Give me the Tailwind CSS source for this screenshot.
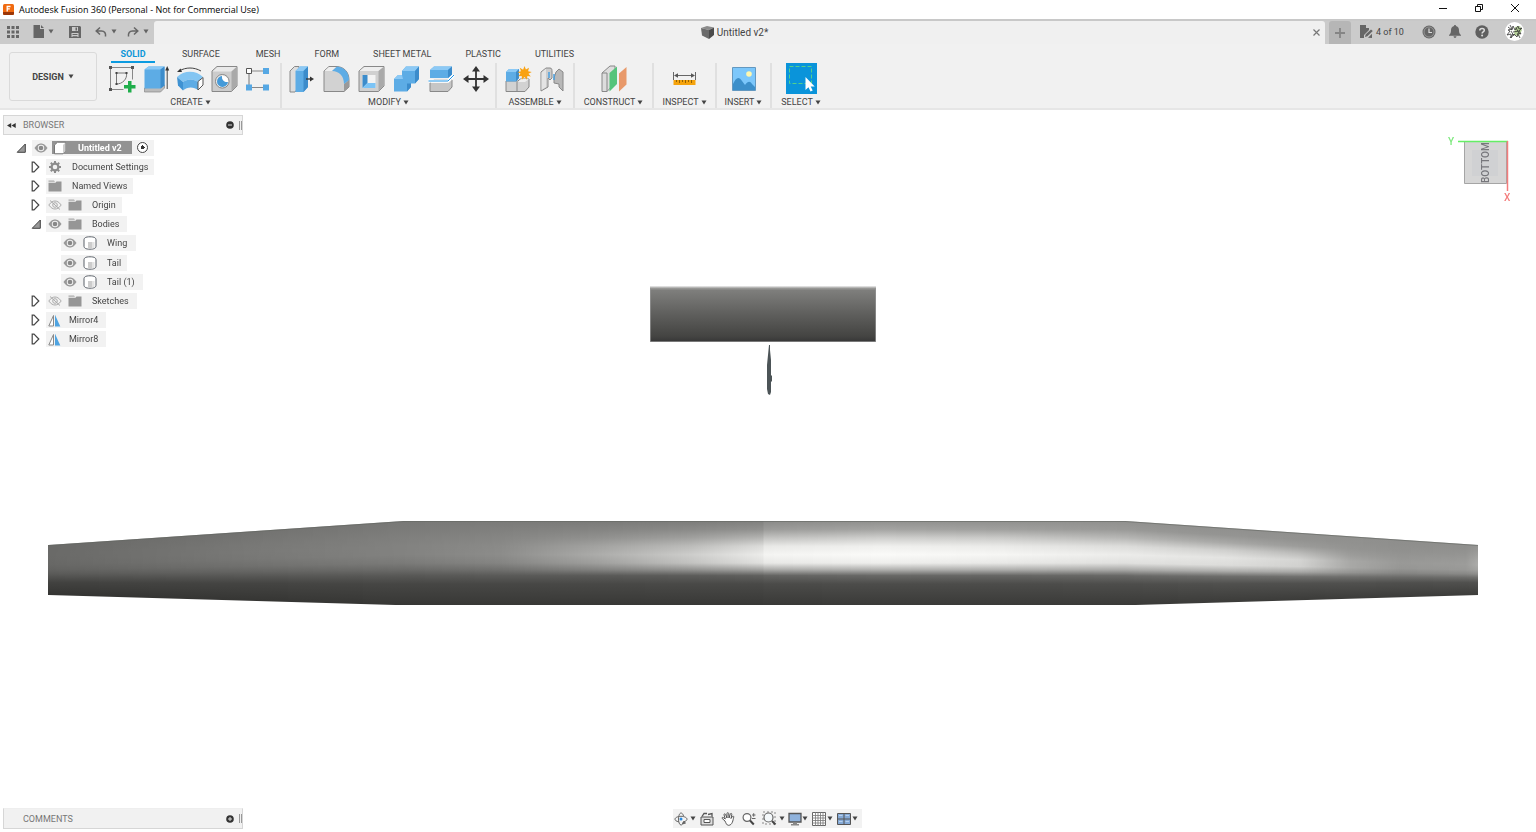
<!DOCTYPE html>
<html lang="en">
<head>
  <meta charset="UTF-8">
  <meta name="viewport" content="width=device-width, initial-scale=1.0">
  <title>Autodesk Fusion 360</title>
  <script src="https://cdn.jsdelivr.net/npm/@tailwindcss/browser@4"></script>
</head>
<body class="flex h-screen flex-col overflow-hidden bg-white font-['Roboto','Liberation_Sans',sans-serif] text-[9px] leading-[12px] text-[#444]">

  <!-- shared icons -->
  <svg class="hidden">
    <symbol id="caret" viewBox="0 0 6 5"><path d="M.5.5h5L3 4.5z" fill="currentColor"/></symbol>
    <symbol id="eye" viewBox="0 0 14 10"><path d="M.5 5C3 1.300 5 .5 7 .5s4 .8 6.500 4.500C11 8.700 9 9.500 7 9.500S3 8.700.5 5z" fill="#999"/><circle cx="7" cy="5" r="3.200" fill="#f2f2f2"/><circle cx="7" cy="5" r="2.300" fill="#888"/></symbol>
    <symbol id="eye-off" viewBox="0 0 14 10"><path d="M.8 5C3 2 5 1 7 1s4 1 6.200 4C11 8 9 9 7 9S3 8 .8 5z" fill="none" stroke="#aaa"/><circle cx="7" cy="5" r="2.300" fill="none" stroke="#aaa"/><path d="M2 .5l10 9" stroke="#aaa"/></symbol>
    <symbol id="folder" viewBox="0 0 14 12"><path d="M.5.500h5.500l1 1.300H.5z" fill="#aaa"/><path d="M.5 2.800h7l1-1.300h5v10H.5z" fill="#969696"/></symbol>
    <symbol id="closed" viewBox="0 0 9 12"><path d="M1.200 1.200H3L7.800 6 3 10.800H1.200z" fill="#fff" stroke="#444" stroke-width="1.200"/></symbol>
    <symbol id="opened" viewBox="0 0 10 10"><path d="M9.300 1v8.300H1.200z" fill="#999" stroke="#444"/></symbol>
    <symbol id="body" viewBox="0 0 14 14"><path d="M1 4C1 2 2.500.8 7 .8S13 2 13 4v6c0 2-1.500 3.200-6 3.200S1 12 1 10z" fill="#fff" stroke="#5a6068"/><path d="M5 6h4v6.500H5z" fill="#ccc"/><path d="M9 6h2.500v6L9 12.500z" fill="#e4e4e4"/></symbol>
    <symbol id="mirror" viewBox="0 0 13 13"><path d="M5.500 1.500v10.500H.8z" fill="#fff" stroke="#888"/><path d="M7 .8v11.700h5.300z" fill="#4fa3e0"/></symbol>
  </svg>

  <header class="flex h-[19px] shrink-0 items-center bg-white pl-[3px] text-black">
    <svg class="mr-[5px] size-[11px]" viewBox="0 0 11 11"><rect width="11" height="11" rx="1.500" fill="#f06a10"/><path d="M0 8l11 0v1.500a1.500 1.500 0 0 1-1.500 1.500h-8A1.500 1.500 0 0 1 0 9.500z" fill="#9c3606"/><path d="M4.200 7.500V2.500h3.300M4.200 4.900h2.600" fill="none" stroke="#fff" stroke-width="1.300"/></svg>
    <h1 class="font-['Open_Sans',sans-serif]">Autodesk Fusion 360 (Personal - Not for Commercial Use)</h1>
    <div class="ml-auto flex items-center pr-[3px] pb-[3px]">
      <button aria-label="Minimize" class="grid w-[36px] place-items-center"><svg class="size-[10px]" viewBox="0 0 10 10"><path d="M1 5.500h8" stroke="#111"/></svg></button>
      <button aria-label="Restore" class="grid w-[36px] place-items-center"><svg class="size-[10px]" viewBox="0 0 10 10"><path d="M1.500 3.500h5v5h-5zM3.500 3.500v-2h5v5h-2" fill="none" stroke="#111"/></svg></button>
      <button aria-label="Close" class="grid w-[36px] place-items-center"><svg class="size-[10px]" viewBox="0 0 10 10"><path d="M1 1l8 8M9 1l-8 8" stroke="#111"/></svg></button>
    </div>
  </header>

  <!-- quick access bar and document tab -->
  <div class="flex h-[25px] shrink-0 border-t-2 border-[#c8c8c8] bg-[#cbcbcb] text-[#636363]">
    <div class="flex w-[154px] items-center pb-[2px] pl-[7px]">
      <button aria-label="Data panel"><svg class="size-[12px]" viewBox="0 0 12 12" fill="#666"><path d="M0 0h3v3H0zM4.500 0h3v3h-3zM9 0h3v3H9zM0 4.500h3v3H0zM4.500 4.500h3v3h-3zM9 4.500h3v3H9zM0 9h3v3H0zM4.500 9h3v3h-3zM9 9h3v3H9z"/></svg></button>
      <button aria-label="File" class="ml-[14px] flex items-center gap-[4px]"><svg class="h-[13px] w-[11px]" viewBox="0 0 11 13"><path d="M.5 0H7v4h4v9H.5zM8 0l3 3H8z" fill="#666"/></svg><svg class="h-[5px] w-[6px]"><use href="#caret"/></svg></button>
      <button aria-label="Save" class="ml-[15px]"><svg class="size-[12px]" viewBox="0 0 12 12"><path d="M0 0h11l1 1v11H0z" fill="#666"/><path d="M3 1h6v4H3zM2.500 7h7v4h-7z" fill="#cbcbcb"/><path d="M6.500 1.500H8v3H6.500zM3.500 8h5v1h-5zM3.500 10h5v.8h-5z" fill="#666"/></svg></button>
      <button aria-label="Undo" class="ml-[14px] flex items-center gap-[4px]"><svg class="size-[12px]" viewBox="0 0 12 12" fill="none" stroke="#666" stroke-width="1.500"><path d="M5 1.500L1.200 5 5 8.500M1.500 5h5C9.500 5 11 7 10.500 10.500"/></svg><svg class="h-[5px] w-[6px]"><use href="#caret"/></svg></button>
      <button aria-label="Redo" class="ml-[10px] flex items-center gap-[4px]"><svg class="size-[12px]" viewBox="0 0 12 12" fill="none" stroke="#666" stroke-width="1.500"><path d="M7 1.500L10.800 5 7 8.500M10.500 5h-5C2.500 5 1 7 1.500 10.500"/></svg><svg class="h-[5px] w-[6px]"><use href="#caret"/></svg></button>
    </div>
    <div class="flex grow items-center rounded-t-[3px] bg-[#f0f0f0] pr-[4px] pl-[3px]">
      <div class="flex grow items-center justify-center gap-[3px] text-[10px] text-[#444]">
        <svg class="size-[13px]" viewBox="0 0 13 13"><path d="M0 2l6-2 7 1.500L8 4z" fill="#8a8a8a"/><path d="M0 2l8 2v9L1 9.500z" fill="#6b6b6b"/><path d="M8 4l5-2.500V9l-5 4z" fill="#4b4b4b"/></svg>
        <span>Untitled v2*</span>
      </div>
      <button aria-label="Close tab"><svg class="size-[9px]" viewBox="0 0 9 9"><path d="M1.500 1.500l6 6M7.500 1.500l-6 6" stroke="#777" stroke-width="1.200"/></svg></button>
    </div>
    <div class="mr-[2px] flex w-[209px] items-center pl-[4px]">
      <button aria-label="New design" class="grid h-full w-[22px] place-items-center rounded-t-[3px] bg-[#b6b6b6]"><svg class="size-[10px]" viewBox="0 0 10 10"><path d="M5 0v10M0 5h10" stroke="#858585" stroke-width="1.800"/></svg></button>
      <button class="ml-[9px] flex items-center gap-[3px] pb-[2px] whitespace-nowrap text-[#444]"><svg class="size-[13px]" viewBox="0 0 13 13"><path d="M0 0h6v3h3v2L4 10v3H0z" fill="#666"/><path d="M5 12l.6-2.400L11 4.500 12.800 6l-5.400 5.300zM8 12.800l4-4V13z" fill="#666"/></svg>4 of 10</button>
      <button aria-label="Job status" class="ml-[18px] pb-[2px]"><svg class="size-[14px]" viewBox="0 0 14 14"><circle cx="7" cy="7" r="6.500" fill="#666"/><circle cx="7" cy="7" r="5" fill="none" stroke="#aaa" stroke-width=".7"/><path d="M7 3.500V7.500h3" fill="none" stroke="#ddd" stroke-width="1.200"/></svg></button>
      <button aria-label="Notifications" class="ml-[13px] pb-[2px]"><svg class="h-[13px] w-[12px]" viewBox="0 0 12 13"><path d="M6 0c.8 0 1 .5 1 1 2.500.6 3 2.500 3 4.500 0 2.500.7 3.500 2 4.500v.8H0V10c1.300-1 2-2 2-4.500C2 3.500 2.500 1.600 5 1c0-.5.200-1 1-1zM4.500 11.300h3C7.300 12.500 6.800 13 6 13s-1.300-.5-1.500-1.700z" fill="#666"/></svg></button>
      <button aria-label="Help" class="ml-[14px] pb-[2px]"><svg class="size-[14px]" viewBox="0 0 14 14"><circle cx="7" cy="7" r="6.700" fill="#606060"/><path d="M4.800 5.500C4.800 2.800 9.300 2.900 9.300 5.300 9.300 7 7.100 6.800 7.100 8.500" fill="none" stroke="#ddd" stroke-width="1.500"/><circle cx="7.100" cy="10.600" r="1" fill="#ddd"/></svg></button>
      <button aria-label="Account" class="ml-[16px] pb-[2px]"><svg class="size-[19px]" viewBox="0 0 19 19"><circle cx="9.500" cy="9.500" r="9.500" fill="#fff"/><path d="M10 5l5-1 2 4-3 6-5-1z" fill="#b5cf98"/><path d="M3 5l4 3 1-4 2 4 3-4 1 3 3-1-3 3 2 3-3-1-1 4-3-3-3 4v-4l-4 1 3-4-2-1 4-1M11 6l3 5M8 10l6-1M6 9l3 5M5 3l2 4M5 16l3-4M13 12l2 4" fill="none" stroke="#333" stroke-width=".8"/></svg></button>
    </div>
  </div>

  <!-- ribbon -->
  <div class="flex h-[66px] shrink-0 border-b-2 border-[#e6e6e6] bg-[#f1f1f1]">
    <button class="mt-[8px] ml-[9px] flex h-[49px] w-[88px] items-center justify-center gap-[4px] rounded-[3px] border border-[#dadada] font-bold">DESIGN<svg class="h-[5px] w-[6px]"><use href="#caret"/></svg></button>
    <div class="ml-[8px]">
      <nav class="flex h-[19px] pl-[6px]">
        <button class="w-[44px] border-b-2 border-[#0c9be0] pt-[2px] font-bold text-[#0c96d8]">SOLID</button>
        <button class="ml-[18px] px-[9px]">SURFACE</button>
        <button class="ml-[18px] px-[9px]">MESH</button>
        <button class="ml-[16px] px-[9px]">FORM</button>
        <button class="ml-[16px] px-[9px]">SHEET METAL</button>
        <button class="ml-[16px] px-[9px]">PLASTIC</button>
        <button class="ml-[16px] px-[9px]">UTILITIES</button>
      </nav>
      <div class="flex divide-x-2 divide-[#e0e0e0]">
        <section class="flex w-[177px] flex-col items-center">
          <div class="flex h-[31px] w-full items-center">
            <button aria-label="Create sketch" class="grid w-[34px] place-items-center"><svg class="size-[28px]" viewBox="0 0 28 28"><path d="M2.500 2.500h22M2.500 2.500v22h13M24.500 2.500v12" fill="none" stroke="#888"/><path d="M1 1h3v3H1zM23 1h3v3h-3zM1 23h3v3H1z" fill="#555"/><path d="M8.500 8v11M8.500 8h10c1 6-4 11-10 11" fill="none" stroke="#777"/><path d="M7.500 7h2v2h-2zM17.500 7h2v2h-2zM7.500 18h2v2h-2z" fill="#444"/><path d="M20 16h3.500v4h4v3.500h-4v4H20v-4h-4V20h4z" fill="#1fae4b"/></svg></button>
            <button aria-label="Extrude" class="grid w-[34px] place-items-center"><svg class="size-[28px]" viewBox="0 0 28 28"><path d="M2.500 23v4h16l4-4v-3z" fill="#bbb" stroke="#888" stroke-width=".7"/><path d="M2.500 4.500l4-3h16v19l-4 3h-16z" fill="#5dace5"/><path d="M2.500 4.500l4-3h16l-4 3z" fill="#8cc9f5"/><path d="M18.500 4.500l4-3v19l-4 3z" fill="#3c8ccb"/><path d="M25.200 24V4" stroke="#444"/><path d="M25.200 1l2 4.500h-4z" fill="#333"/></svg></button>
            <button aria-label="Revolve" class="grid w-[34px] place-items-center"><svg class="size-[28px]" viewBox="0 0 28 28"><path d="M3 6c7-4 15-4 22 0" fill="none" stroke="#444"/><path d="M1 7l3.500-3.500L6 7z" fill="#333"/><path d="M1 12c7-7 19-7 26 0l-5 5c-4-3.500-11-3.500-15 0z" fill="#83c5f2"/><path d="M1 12l6 5v8.500l-5-5z" fill="#3f92d2"/><path d="M7 17c4-3.500 11-3.500 15 0v8c-4-3.500-11-3.500-15 .5z" fill="#5dace5"/><path d="M22 16.500l5-4V20l-5 5z" fill="#fff" stroke="#555"/></svg></button>
            <button aria-label="Hole" class="grid w-[34px] place-items-center"><svg class="size-[28px]" viewBox="0 0 28 28"><path d="M2 6l5-4.500h20V21l-5.500 5.500H2z" fill="#ccc" stroke="#888"/><path d="M2.500 6.500l5-4.500h19l-5 4.500z" fill="#e9e9e9"/><path d="M21.500 6.500l5-4.500v19l-5 5z" fill="#a9a9a9"/><circle cx="12.300" cy="16.300" r="6.800" fill="#eee" stroke="#888"/><path d="M12 11a5.500 5.500 0 1 0 6 6c-4 0-6-2-6-6z" fill="#459ad8"/><path d="M12 11c0 4 2 6 6 6 0-4-2-6-6-6z" fill="#fff"/></svg></button>
            <button aria-label="Rectangular pattern" class="grid w-[34px] place-items-center"><svg class="size-[28px]" viewBox="0 0 28 28"><path d="M8 6h11M5 9v11M8 22.500h11" stroke="#888" stroke-width="1.200"/><path d="M2.500 3.500h5v5h-5z" fill="#fff" stroke="#555"/><path d="M19 3h6v6h-6zM2 19.500h6v6H2zM19 19.500h6v6h-6z" fill="#56a8e4"/></svg></button>
          </div>
          <button class="mt-[2px] mr-[4px] flex items-center gap-[2px]">CREATE<svg class="h-[5px] w-[6px]"><use href="#caret"/></svg></button>
        </section>
        <section class="flex w-[215px] flex-col items-center pr-[2px] pl-[2px]">
          <div class="flex h-[31px] w-full items-center">
            <button aria-label="Press pull" class="grid w-[35px] place-items-center"><svg class="size-[28px]" viewBox="0 0 28 28"><path d="M3 6l4.500-4.500H12V22l-4 5H3z" fill="#ddd" stroke="#888"/><path d="M8.500 6L13 1.500h8V22l-4.500 5h-8z" fill="#5dace5"/><path d="M8.500 6L13 1.500h8L16.500 6z" fill="#8cc9f5"/><path d="M16.500 6L21 1.500V22l-4.500 5z" fill="#3c8ccb"/><path d="M19 14h5" stroke="#333" stroke-width="1.300"/><path d="M27 14l-4-2.500v5z" fill="#333"/></svg></button>
            <button aria-label="Fillet" class="grid w-[35px] place-items-center"><svg class="size-[28px]" viewBox="0 0 28 28"><path d="M2 6l5-4.500h8C22 2 27 7 27 15v7l-5 4.500H2z" fill="#d2d2d2" stroke="#888"/><path d="M2.500 6L7 2h7l-4 4z" fill="#eee"/><path d="M22 19l5-4v7l-5 4.500z" fill="#999"/><path d="M10 6l5-4.500C22 2 27 7 27 15l-5 4C22 11 17 6 10 6z" fill="#5dace5"/></svg></button>
            <button aria-label="Shell" class="grid w-[35px] place-items-center"><svg class="size-[28px]" viewBox="0 0 28 28"><path d="M2 6l5-4.500h20V21l-5.500 5.500H2z" fill="#d0d0d0" stroke="#888"/><path d="M2.500 6l5-4h19l-5 4z" fill="#eee"/><path d="M21.500 6l5-4v19l-5 5z" fill="#a9a9a9"/><path d="M5.500 10h13v13h-13z" fill="#f3f3f3"/><path d="M5.500 10h5v8l-5 5z" fill="#3c8ccb"/><path d="M5.500 23l5-5h8v5z" fill="#7cc4f6"/></svg></button>
            <button aria-label="Combine" class="grid w-[35px] place-items-center"><svg class="size-[28px]" viewBox="0 0 28 28"><path d="M2 14l4-4h4V6l4-4.500h13V14l-4 4.500h-4V22l-4 4.500H2z" fill="#5dace5"/><path d="M2 14l4-4h4l1 4zM10 6l4-4.500h13L23 6z" fill="#8cc9f5"/><path d="M23 6l4-4.500V14l-4 4.500zM15 18.500h4V22l-4 4.500z" fill="#3c8ccb"/></svg></button>
            <button aria-label="Split body" class="grid w-[35px] place-items-center"><svg class="size-[28px]" viewBox="0 0 28 28"><path d="M3 18l4-3h18v7l-4 4.500H3z" fill="#c6c6c6" stroke="#888"/><path d="M3 18h18l4-3H7z" fill="#eee"/><path d="M3 5l4-3.500h18v8L21 13H3z" fill="#5dace5"/><path d="M3 5l4-3.500h18L21 5z" fill="#8cc9f5"/><path d="M21 5l4-3.500v8L21 13z" fill="#3c8ccb"/><path d="M1.500 16H21l6-6" fill="none" stroke="#fff" stroke-width="3"/><path d="M1.500 16H21l6-6" fill="none" stroke="#2196e8"/></svg></button>
            <button aria-label="Move/Copy" class="grid w-[35px] place-items-center"><svg class="size-[28px]" viewBox="0 0 28 28"><path d="M14 4v20M4 14h20" stroke="#333" stroke-width="1.800"/><path d="M14 1l4 5.500h-8zM14 27l4-5.500h-8zM1 14l5.500-4v8zM27 14l-5.500-4v8z" fill="#333"/></svg></button>
          </div>
          <button class="mt-[2px] flex items-center gap-[2px]">MODIFY<svg class="h-[5px] w-[6px]"><use href="#caret"/></svg></button>
        </section>
        <section class="flex w-[78px] flex-col items-center">
          <div class="flex h-[31px] items-center">
            <button aria-label="New component" class="grid w-[34px] place-items-center"><svg class="size-[28px]" viewBox="0 0 28 28"><path d="M2 16h12l2-2h9v8l-4 4.500H2z" fill="#d2d2d2" stroke="#888"/><path d="M13 17v9" stroke="#888"/><path d="M14 17l3-3h8l-4 3z" fill="#eee"/><path d="M2 7l3-3h10v9l-3 3.500H2z" fill="#5dace5"/><path d="M2 7l3-3h10l-3 3z" fill="#8cc9f5"/><path d="M12 7l3-3v9l-3 3.500z" fill="#3c8ccb"/><path d="M20.500 1l1.400 3.600L25 2.800l-.9 3.400 3.600.8-3.200 1.700 2.300 2.800-3.400-.4-.4 3.600-2.500-2.800-2.600 2.800-.2-3.700-3.400.3 2.200-2.700L13.500 7l3.500-.7-1.200-3.500 3.300 1.900z" fill="#f9a212"/></svg></button>
            <button aria-label="Joint" class="grid w-[34px] place-items-center"><svg class="size-[28px]" viewBox="0 0 28 28"><path d="M3 7l5-4h4c2 0 2 2 2 4v6l-2 2-2-2v9l-7 4z" fill="#ccc" stroke="#888"/><path d="M3.500 7.500L8 3.500V22l-4.500 3z" fill="#e4e4e4"/><path d="M25 7l-4-3-3 3-2 6v5l5 1v3l4 4z" fill="#b8b8b8" stroke="#888"/><path d="M11 7v6M16 9v6" stroke="#4aa0e0" stroke-width="1.500"/></svg></button>
          </div>
          <button class="mt-[2px] flex items-center gap-[2px]">ASSEMBLE<svg class="h-[5px] w-[6px]"><use href="#caret"/></svg></button>
        </section>
        <section class="flex w-[79px] flex-col items-center">
          <button aria-label="Offset plane" class="grid h-[31px] w-[34px] place-items-center"><svg class="size-[28px]" viewBox="0 0 28 28"><path d="M2 8l8-7h5v17l-8 8.500H2z" fill="#ddd" stroke="#888"/><path d="M2 8h5v18.500" fill="none" stroke="#888"/><path d="M9.500 8L17 1.500V19l-7.500 7.500z" fill="#55c47b"/><path d="M19 8.500L26.500 2v17.500L19 26.500z" fill="#e8996a"/></svg></button>
          <button class="mt-[2px] flex items-center gap-[2px]">CONSTRUCT<svg class="h-[5px] w-[6px]"><use href="#caret"/></svg></button>
        </section>
        <section class="flex w-[63px] flex-col items-center">
          <button aria-label="Measure" class="grid h-[31px] w-[34px] place-items-center"><svg class="size-[28px]" viewBox="0 0 28 28"><path d="M2.500 7v8M24.500 7v8M5 10.500h17" stroke="#666"/><path d="M3 10.500l4-2.200v4.400zM24 10.500l-4-2.200v4.400z" fill="#555"/><path d="M2.500 15h22v5h-22z" fill="#f5a30c"/><path d="M5.500 15v2M8.500 15v3M11.500 15v2M14.500 15v3M17.500 15v2M20.500 15v3" stroke="#7b5200" stroke-width=".8"/></svg></button>
          <button class="mt-[2px] flex items-center gap-[2px]">INSPECT<svg class="h-[5px] w-[6px]"><use href="#caret"/></svg></button>
        </section>
        <section class="flex w-[55px] flex-col items-center">
          <button aria-label="Insert canvas" class="grid h-[31px] w-[34px] place-items-center"><svg class="size-[28px]" viewBox="0 0 28 28"><path d="M2.500 2.500h23v23h-23z" fill="#7cc7fb" stroke="#6398c0"/><path d="M3 19c3-7 6-8 9-3l3 4c3-4 5-4 7-1l3 3v3H3z" fill="#3c8fca"/><circle cx="19" cy="9" r="2.800" fill="#fff7ae"/></svg></button>
          <button class="mt-[2px] flex items-center gap-[2px]">INSERT<svg class="h-[5px] w-[6px]"><use href="#caret"/></svg></button>
        </section>
        <section class="flex w-[58px] flex-col items-center">
          <button aria-label="Select" class="h-[31px]"><svg class="h-[31px] w-[31px]" viewBox="0 0 31 31"><path d="M0 0h31v31H0z" fill="#0a94da"/><path d="M3.500 3.500h22v17h-22z" fill="none" stroke="#53d08c" stroke-dasharray="4 2"/><path d="M19.500 14v13l3-2.700 2 4.200 2.200-1-2-4h4z" fill="#fff"/></svg></button>
          <button class="mt-[2px] flex items-center gap-[2px]">SELECT<svg class="h-[5px] w-[6px]"><use href="#caret"/></svg></button>
        </section>
      </div>
    </div>
  </div>

  <main class="relative flex min-h-0 grow flex-col justify-between">
    <canvas id="viewport" width="1536" height="722" class="absolute inset-0 h-full w-full"></canvas>

    <!-- view cube -->
    <svg class="absolute top-[22px] right-[20px] h-[72px] w-[70px]" viewBox="0 0 70 72" font-family="Roboto, sans-serif">
      <path d="M18.500 9.500h42v42h-42z" fill="#d6d6d6" stroke="#a5a5a5"/>
      <path d="M26 18h26v26H26z" fill="#d0d1d3"/>
      <text transform="translate(43 51) rotate(-90)" font-size="10" font-weight="500" fill="#77777c">BOTTOM</text>
      <path d="M12 9.500h50" stroke="#66ee66" stroke-width="1.500"/>
      <path d="M61.500 9v50" stroke="#f47c7c" stroke-width="1.500"/>
      <text x="2" y="13" font-size="10" font-weight="500" fill="#7de87d">Y</text>
      <text x="58" y="69" font-size="10" font-weight="500" fill="#f47c7c">X</text>
    </svg>

    <aside class="relative w-[243px] pt-[5px] pl-[3px]">
      <div class="flex h-[20px] items-center border border-[#d6d6d6] bg-[#f1f1f1] pl-[3px] text-[#777]">
        <button aria-label="Collapse" class="mr-[7px]"><svg class="h-[5px] w-[9px]" viewBox="0 0 9 5"><path d="M4.200 0v5L0 2.500zM8.700 0v5L4.500 2.500z" fill="#333"/></svg></button>
        <h2>BROWSER</h2>
        <button aria-label="Hide panel" class="ml-auto"><svg class="size-[8px]" viewBox="0 0 8 8"><circle cx="4" cy="4" r="3.800" fill="#333"/><path d="M2 4h4" stroke="#ddd"/></svg></button>
        <span class="ml-[5px] h-[9px] w-[3px] border-x border-[#999]"></span>
      </div>
      <ul class="mt-[3px] grid h-[211px] grid-rows-11 items-center">
        <li class="flex items-center pl-[13px]">
          <svg class="size-[10px]"><use href="#opened"/></svg>
          <div class="ml-[6px] flex h-[16px] items-center bg-[#f2f2f2] pr-[6px] pl-[2px]">
            <svg class="h-[10px] w-[14px]"><use href="#eye"/></svg>
            <span class="ml-[4px] flex h-[13px] items-center bg-[#939393] pr-[10px] pl-[1px] font-bold text-white"><svg class="mr-[11px] size-[14px]" viewBox="0 0 14 14"><path d="M1.500 4l3-2.800h8V10L10 12.800H1.500z" fill="#fff" stroke="#777"/><path d="M10 4l2.500-2.500V10L10 12.500z" fill="#ccc"/></svg>Untitled v2</span>
            <input type="radio" checked aria-label="Activate component" class="ml-[5px] size-[11px] appearance-none rounded-full border border-[#444] bg-[radial-gradient(circle,#333_2px,#fff_2px)]">
          </div>
        </li>
        <li class="flex items-center pl-[28px]">
          <svg class="h-[12px] w-[9px]"><use href="#closed"/></svg>
          <div class="ml-[6px] flex h-[16px] items-center bg-[#f2f2f2] pr-[6px] pl-[3px]">
            <svg class="size-[12px]" viewBox="0 0 12 12"><circle cx="6" cy="6" r="3.400" fill="none" stroke="#8c8c8c" stroke-width="2.200"/><path d="M6 0v2M6 10v2M0 6h2M10 6h2M1.800 1.800l1.400 1.400M8.800 8.800l1.400 1.400M1.800 10.200l1.400-1.400M8.800 3.200l1.400-1.400" stroke="#8c8c8c" stroke-width="2"/></svg>
            <span class="ml-[11px]">Document Settings</span>
          </div>
        </li>
        <li class="flex items-center pl-[28px]">
          <svg class="h-[12px] w-[9px]"><use href="#closed"/></svg>
          <div class="ml-[6px] flex h-[16px] items-center bg-[#f2f2f2] pr-[6px] pl-[2px]">
            <svg class="h-[12px] w-[14px]"><use href="#folder"/></svg>
            <span class="ml-[10px]">Named Views</span>
          </div>
        </li>
        <li class="flex items-center pl-[28px]">
          <svg class="h-[12px] w-[9px]"><use href="#closed"/></svg>
          <div class="ml-[6px] flex h-[16px] items-center bg-[#f2f2f2] pr-[6px] pl-[2px]">
            <svg class="h-[10px] w-[14px]"><use href="#eye-off"/></svg>
            <svg class="ml-[6px] h-[12px] w-[14px]"><use href="#folder"/></svg>
            <span class="ml-[10px]">Origin</span>
          </div>
        </li>
        <li class="flex items-center pl-[28px]">
          <svg class="size-[10px]"><use href="#opened"/></svg>
          <div class="ml-[5px] flex h-[16px] items-center bg-[#f2f2f2] pr-[8px] pl-[2px]">
            <svg class="h-[10px] w-[14px]"><use href="#eye"/></svg>
            <svg class="ml-[6px] h-[12px] w-[14px]"><use href="#folder"/></svg>
            <span class="ml-[10px]">Bodies</span>
          </div>
        </li>
        <li class="flex items-center pl-[58px]">
          <div class="flex h-[16px] items-center bg-[#f2f2f2] pr-[9px] pl-[2px]">
            <svg class="h-[10px] w-[14px]"><use href="#eye"/></svg>
            <svg class="ml-[6px] size-[14px]"><use href="#body"/></svg>
            <span class="ml-[10px]">Wing</span>
          </div>
        </li>
        <li class="flex items-center pl-[58px]">
          <div class="flex h-[16px] items-center bg-[#f2f2f2] pr-[6px] pl-[2px]">
            <svg class="h-[10px] w-[14px]"><use href="#eye"/></svg>
            <svg class="ml-[6px] size-[14px]"><use href="#body"/></svg>
            <span class="ml-[10px]">Tail</span>
          </div>
        </li>
        <li class="flex items-center pl-[58px]">
          <div class="flex h-[16px] items-center bg-[#f2f2f2] pr-[8px] pl-[2px]">
            <svg class="h-[10px] w-[14px]"><use href="#eye"/></svg>
            <svg class="ml-[6px] size-[14px]"><use href="#body"/></svg>
            <span class="ml-[10px]">Tail (1)</span>
          </div>
        </li>
        <li class="flex items-center pl-[28px]">
          <svg class="h-[12px] w-[9px]"><use href="#closed"/></svg>
          <div class="ml-[6px] flex h-[16px] items-center bg-[#f2f2f2] pr-[8px] pl-[2px]">
            <svg class="h-[10px] w-[14px]"><use href="#eye-off"/></svg>
            <svg class="ml-[6px] h-[12px] w-[14px]"><use href="#folder"/></svg>
            <span class="ml-[10px]">Sketches</span>
          </div>
        </li>
        <li class="flex items-center pl-[28px]">
          <svg class="h-[12px] w-[9px]"><use href="#closed"/></svg>
          <div class="ml-[6px] flex h-[16px] items-center bg-[#f2f2f2] pr-[8px] pl-[2px]">
            <svg class="size-[13px]"><use href="#mirror"/></svg>
            <span class="ml-[8px]">Mirror4</span>
          </div>
        </li>
        <li class="flex items-center pl-[28px]">
          <svg class="h-[12px] w-[9px]"><use href="#closed"/></svg>
          <div class="ml-[6px] flex h-[16px] items-center bg-[#f2f2f2] pr-[8px] pl-[2px]">
            <svg class="size-[13px]"><use href="#mirror"/></svg>
            <span class="ml-[8px]">Mirror8</span>
          </div>
        </li>
      </ul>
    </aside>

    <footer class="relative grid grid-cols-[240px_1fr_240px] items-center pr-[4px] pb-[3px] pl-[3px]">
      <div class="flex h-[21px] items-center border border-[#d6d6d6] border-t-[#eee] bg-[#f1f1f1] pl-[19px] text-[#777]">
        <h2>COMMENTS</h2>
        <button aria-label="Show comments" class="ml-auto"><svg class="size-[8px]" viewBox="0 0 8 8"><circle cx="4" cy="4" r="3.800" fill="#333"/><path d="M2 4h4M4 2v4" stroke="#ddd"/></svg></button>
        <span class="ml-[5px] h-[9px] w-[3px] border-x border-[#999]"></span>
      </div>
      <div class="flex h-[19px] w-[189px] items-center justify-self-center bg-[#f2f2f2] pl-[1px] text-[#444]">
        <button aria-label="Orbit" class="flex items-center gap-[2px]"><svg class="size-[14px]" viewBox="0 0 14 14" fill="none" stroke="#666"><path d="M5 9.800C2 9.400 1 8.200 1 7.200 1 5.500 4 4.300 7 4.300s6 1.200 6 2.900c0 1-1 2-3 2.500"/><path d="M9.500 4C9 2 8 1 7 1 5.500 1 4.500 4 4.500 7s1 6 2.500 6c1 0 1.800-1 2.300-2.600"/><circle cx="7" cy="7" r="1.500" fill="#2b8be0" stroke="none"/><path d="M8.500 12l1-2.500 2 1.500z" fill="#555"/></svg><svg class="h-[5px] w-[6px]"><use href="#caret"/></svg></button>
        <button aria-label="Look at" class="ml-[4px]"><svg class="size-[14px]" viewBox="0 0 14 14"><path d="M1 5h12v8H1z" fill="#ddd" stroke="#555"/><path d="M4 7.500h6v3H4z" fill="#fff" stroke="#555"/><path d="M2 4.500l2-3h3M8 2.500l4-1v3" fill="none" stroke="#555" stroke-width="1.300"/></svg></button>
        <button aria-label="Pan" class="ml-[7px]"><svg class="size-[14px]" viewBox="0 0 14 14"><path d="M4 9L1.200 6.500c-.5-1 .5-1.500 1.300-.8L4.300 7 3 2.800c0-1.200 1.200-1.300 1.600-.3L6 6V1.500C6 .4 7.500.4 7.700 1.500L8 6l1.300-4c.4-1 1.600-.7 1.500.4L10 6.500l1.400-2c.6-.8 1.600-.3 1.300.7C12 8 11.500 13.300 7.500 13.300 5.500 13.300 5 11 4 9z" fill="#fff" stroke="#444" stroke-width=".9"/></svg></button>
        <button aria-label="Zoom" class="ml-[7px]"><svg class="size-[14px]" viewBox="0 0 14 14"><circle cx="5" cy="5.500" r="3.900" fill="#fff" stroke="#666" stroke-width="1.200"/><path d="M8 8.500l3.800 4" stroke="#444" stroke-width="2"/><path d="M10 3h3.500M11.700 1.200v3.500M10 6.500h3.500" stroke="#666"/></svg></button>
        <button aria-label="Fit" class="ml-[6px] flex items-center gap-[2px]"><svg class="size-[15px]" viewBox="0 0 15 15"><path d="M1 1h12v12H1z" fill="none" stroke="#888" stroke-dasharray="2 2"/><circle cx="6.500" cy="6.500" r="4.500" fill="#f4f8fa" stroke="#666" stroke-width="1.200"/><path d="M10 10l3.500 3.500" stroke="#444" stroke-width="2"/></svg><svg class="h-[5px] w-[6px]"><use href="#caret"/></svg></button>
        <button aria-label="Display settings" class="ml-[3px] flex items-center"><svg class="size-[14px]" viewBox="0 0 14 14"><path d="M1 1.500h12v8.500H1z" fill="#8fb2dc" stroke="#555" stroke-width="1.300"/><path d="M5 10.500h4v1.500h2v1.500H3V12h2z" fill="#888"/></svg><svg class="h-[5px] w-[6px]"><use href="#caret"/></svg></button>
        <button aria-label="Grid and snaps" class="ml-[4px] flex items-center gap-[1px]"><svg class="size-[14px]" viewBox="0 0 14 14"><path d="M.5.5h13v13H.5z" fill="#fff" stroke="#666"/><path d="M3.500 0v14M6 0v14M8.500 0v14M11 0v14M0 3.500h14M0 6h14M0 8.500h14M0 11h14" stroke="#777" stroke-width=".8"/></svg><svg class="h-[5px] w-[6px]"><use href="#caret"/></svg></button>
        <button aria-label="Viewports" class="ml-[4px] flex items-center gap-[1px]"><svg class="h-[12px] w-[14px]" viewBox="0 0 14 12"><path d="M.5.5h13v11H.5z" fill="#84a9d6" stroke="#555"/><path d="M7 0v12M0 6h14" stroke="#555"/><path d="M2 2.500h3.500M8.500 2.500H12M2 8.500h3.500M8.500 8.500H12" stroke="#b7d0ee"/></svg><svg class="h-[5px] w-[6px]"><use href="#caret"/></svg></button>
      </div>
    </footer>
  </main>

  <script>
    const ctx = document.getElementById('viewport').getContext('2d');

    // Shade of the wing: x position, then grey levels at each depth in STOPS
    const STOPS = [0, 0.1, 0.2, 0.3, 0.4, 0.5, 0.58, 0.65, 0.75, 1];
    const SHADES = [
      [48, 106, 106, 106, 105, 103, 98, 90, 80, 66, 52],
      [250, 114, 117, 120, 121, 119, 112, 100, 86, 68, 53],
      [400, 120, 123, 127, 130, 130, 122, 106, 88, 70, 55],
      [500, 122, 128, 133, 138, 140, 132, 112, 90, 71, 56],
      [600, 122, 132, 145, 163, 173, 160, 130, 90, 72, 56],
      [690, 124, 138, 160, 188, 205, 194, 146, 92, 73, 56],
      [762, 128, 145, 180, 220, 236, 224, 162, 96, 73, 56],
      [764, 138, 155, 194, 232, 244, 232, 170, 100, 75, 57],
      [880, 144, 164, 206, 240, 250, 238, 176, 104, 76, 58],
      [1000, 144, 160, 202, 234, 246, 232, 174, 102, 76, 58],
      [1125, 144, 153, 182, 220, 236, 224, 170, 104, 77, 58],
      [1230, 144, 148, 168, 206, 227, 220, 174, 110, 80, 59],
      [1300, 144, 146, 156, 186, 212, 208, 168, 112, 80, 59],
      [1350, 144, 145, 148, 156, 168, 168, 148, 110, 80, 60],
      [1400, 142, 143, 145, 149, 153, 150, 134, 107, 79, 60],
      [1465, 142, 144, 148, 153, 156, 152, 136, 108, 80, 60],
      [1478, 148, 152, 160, 168, 172, 162, 142, 112, 82, 60]
    ];

    function lerp(a, b, t) {
      return a + (b - a) * t;
    }

    function edge(x, tip, mid, from, to) {
      if (x < from) return lerp(tip, mid, (x - 48) / (from - 48));
      if (x > to) return lerp(mid, tip, (x - to) / (1478 - to));
      return mid;
    }

    function drawWing() {
      for (let x = 48; x < 1478; x++) {
        const top = edge(x, 435, 411, 403, 1125);
        const bottom = edge(x, 485, 495, 395, 1135);
        let i = 0;
        while (i < SHADES.length - 2 && SHADES[i + 1][0] <= x) i++;
        const a = SHADES[i];
        const b = SHADES[i + 1];
        const t = (x - a[0]) / (b[0] - a[0]);
        const fill = ctx.createLinearGradient(0, top, 0, bottom);
        STOPS.forEach((stop, n) => {
          const v = Math.round(lerp(a[n + 1], b[n + 1], t));
          fill.addColorStop(stop, `rgb(${v}, ${v}, ${v - 2})`);
        });
        ctx.fillStyle = fill;
        ctx.fillRect(x, top, 1, bottom - top);
        // outline
        ctx.fillStyle = 'rgba(100, 104, 98, 0.6)';
        ctx.fillRect(x, top, 1, 1);
      }
    }

    function drawTail() {
      const fill = ctx.createLinearGradient(0, 176, 0, 232);
      fill.addColorStop(0, '#f0f0f0');
      fill.addColorStop(0.04, '#9a9a98');
      fill.addColorStop(0.08, '#7e7e7c');
      fill.addColorStop(0.5, '#5f5f5d');
      fill.addColorStop(0.9, '#444442');
      fill.addColorStop(1, '#363636');
      ctx.fillStyle = fill;
      ctx.fillRect(650, 176, 226, 56);
      ctx.fillStyle = 'rgba(150, 150, 150, 0.7)';
      ctx.fillRect(650, 178, 1, 54);
      ctx.fillRect(875, 178, 1, 54);
      ctx.fillRect(650, 231, 226, 1);
    }

    function drawFin() {
      ctx.fillStyle = '#4c5457';
      ctx.beginPath();
      [[769, 235], [770, 235], [770, 240], [771, 250], [771, 265], [772, 266], [772, 271], [771, 272], [771, 282], [770, 285], [768, 284], [767, 279], [767, 255], [768, 245]]
        .forEach(([x, y]) => ctx.lineTo(x, y));
      ctx.fill();
    }

    drawWing();
    drawTail();
    drawFin();
  </script>
</body>
</html>
